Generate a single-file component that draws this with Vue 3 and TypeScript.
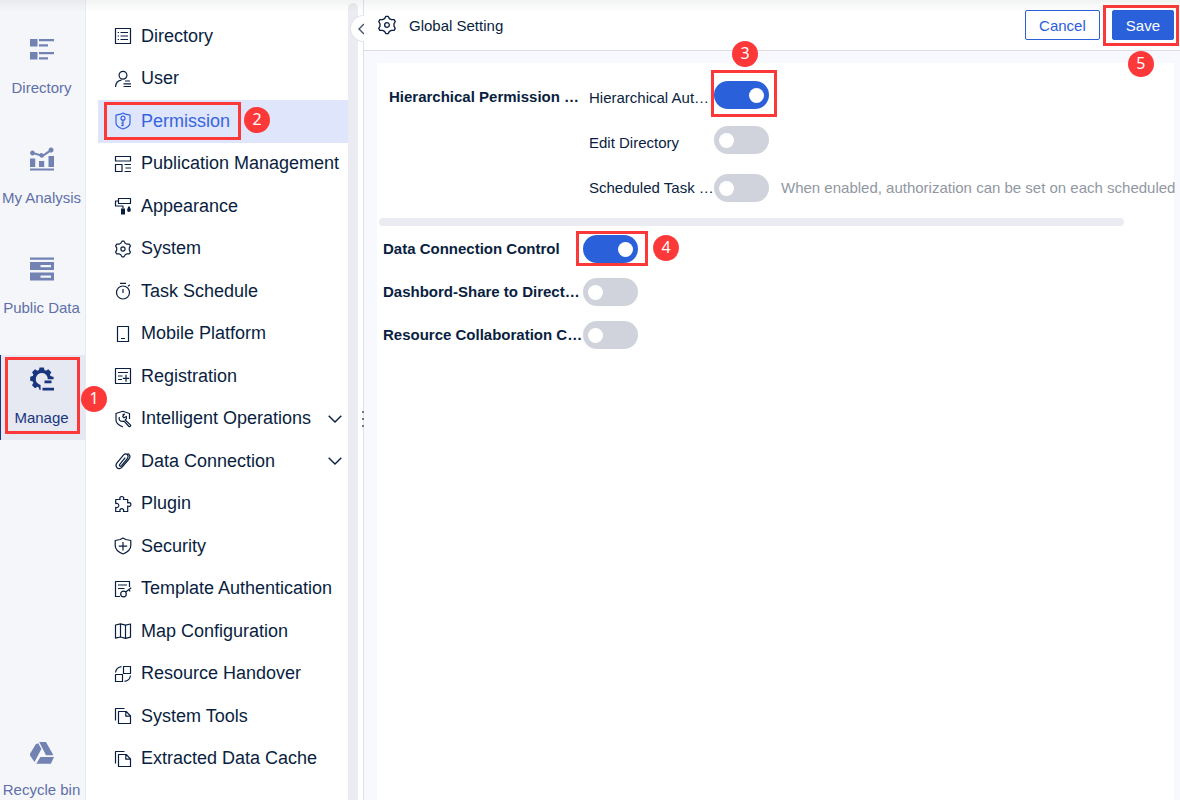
<script setup lang="ts">
import { ref } from 'vue'

interface RailItem {
  label: string
  fill: string
}

interface MenuItem {
  label: string
  line: string
  solid?: string
  expandable?: boolean
}

const gearLine =
  'M8 1.2H10L11.2 3.2 13 4.2H15.4L16.4 5.9 15.3 7.9V10.1L16.4 12.1 15.4 13.8H13L11.2 14.8 10 16.8H8L6.8 14.8 5 13.8H2.6L1.6 12.1 2.7 10.1V7.9L1.6 5.9 2.6 4.2H5L6.8 3.2ZM9 6.9a2.1 2.1 0 1 0 0 4.2a2.1 2.1 0 1 0 0-4.2Z'

const copyLine = 'M1.5 13.5V1.5H10.5M4.5 4.5H12.2L16.5 8.8V16.5H4.5ZM11.8 4.7V9.2H16.2'

const railItems: RailItem[] = [
  {
    label: 'Directory',
    fill: 'M0 2H7.5V9.5H0ZM9 2H24V4.3H9ZM9 7.2H18V9.5H9ZM0 15H7.5V22.5H0ZM9 15H24V17.3H9ZM9 20.2H18V22.5H9Z',
  },
  {
    label: 'My Analysis',
    fill: 'M0 11.5H5.2V20H0ZM9 14H14.2V20H9ZM18.5 9H24V20H18.5ZM0 21.5H24V23.6H0ZM2.5 3.6A2.4 2.4 0 0 1 4.8 5.4L9.6 7A2.5 2.5 0 0 1 13.3 7.2L18.6 3.6A2.5 2.5 0 1 1 19.8 5.2L14.2 9.1A2.5 2.5 0 0 1 9.4 9L4.4 7.5A2.4 2.4 0 1 1 2.5 3.6Z',
  },
  {
    label: 'Public Data',
    fill: 'M0 .5H24V2.8H0ZM0 5H24V13H0ZM10.5 8V10.3H21V8ZM0 15.5H24V23.6H0ZM10.5 18.5V20.8H21V18.5Z',
  },
  {
    label: 'Manage',
    fill: 'M9.6 .5H13.8L14.5 3.1 15.9 3.7 18.3 2.3 21.3 5.3 19.9 7.7 20.5 9.1 23.6 9.9V12.2H17.8A6 6 0 1 0 10.6 17.9V23H9.6L8.8 20.4 7.4 19.8 5 21.2 2 18.2 3.4 15.8 2.8 14.4 .2 13.7V9.7L2.8 9 3.4 7.6 2 5.2 5 2.3 7.4 3.7 8.9 3.1ZM14.5 13.5H21.5V16.2H14.5ZM12.5 20.8H24V23.5H12.5Z',
  },
]

const menuItems: MenuItem[] = [
  {
    label: 'Directory',
    line: 'M1.5 1.5H16.5V16.5H1.5ZM6.5 5.5H14M6.5 9H14M6.5 12.5H14',
    solid: 'M3.7 4.9H5V6.1H3.7ZM3.7 8.4H5V9.6H3.7ZM3.7 11.9H5V13.1H3.7Z',
  },
  {
    label: 'User',
    line: 'M9 1.3a3.9 3.9 0 1 0 0 7.8a3.9 3.9 0 1 0 0-7.8ZM1.5 17C1.8 12.9 4 10.5 7.5 10.2M11 11H16M9.5 13.8H17M9.5 16.5H17',
  },
  {
    label: 'Permission',
    line: 'M9 1 11.2 2.2 16 3.2V11C16 13.8 12.5 15.8 9 17 5.5 15.8 2 13.8 2 11V3.2L6.8 2.2ZM9 4.2a2 2 0 1 0 0 4a2 2 0 1 0 0-4ZM9 8.4V14.2M9 11H7.2M9 13.3H7.2',
  },
  {
    label: 'Publication Management',
    line: 'M1.5 1.5H16.5V6H1.5ZM1.5 9.5H8V16.5H1.5ZM10.5 9.5H17M11.5 13H17M10.5 16.5H17',
  },
  {
    label: 'Appearance',
    line: 'M4.5 1.5H16.5V6.5H4.5ZM4.5 4H1.5V9H9V11.5',
    solid: 'M7 11.5H11V17.5H7ZM15 9C17.6 12 17.2 15 15 15 12.8 15 12.4 12 15 9Z',
  },
  { label: 'System', line: gearLine },
  {
    label: 'Task Schedule',
    line: 'M9 4a6.5 6.5 0 1 0 0 13a6.5 6.5 0 1 0 0-13ZM6 1.3H12M9 7V11M14 4.4 15.8 2.8',
  },
  { label: 'Mobile Platform', line: 'M3.5 1.5H14.5V16.5H3.5ZM7 13.5H11' },
  {
    label: 'Registration',
    line: 'M1.5 1.5H16.5V16.5H1.5ZM4 5.5H14M4 9H8.5M4 12.5H8M12 7.8V14.8M8.8 11.3H15.2',
  },
  {
    label: 'Intelligent Operations',
    line: 'M15.5 9V3.5L8.8 1.3 2 3.5V10C2 13.5 5 15.5 9 17M8.6 4.6 10.4 4.1 8.7 6.4 10 7.8 12.4 6.5C12.9 8.4 12.2 9.4 11.2 10L16.6 15.1C17 16.1 16 17 15 16.5L10 11.1C6 12.1 4.2 9.3 5.4 7',
    expandable: true,
  },
  {
    label: 'Data Connection',
    line: 'M11.2 5.6 5.8 12.3C4.8 13.8 6.4 15.1 7.6 13.7L13.3 6.6C15.5 3.2 12.2.3 9.4 3.2L2.8 11.2C.4 14.9 4.9 18.8 8.1 15.2L15 7C17 4.4 15.4 2 13.6 1.5',
    expandable: true,
  },
  {
    label: 'Plugin',
    line: 'M1.7 4.5H6.2C5.2 2.6 6.4 1.5 7.8 1.5S10.4 2.6 9.4 4.5H13.7V8C15.7 7.1 16.9 8 16.9 9.5S15.7 12 13.7 11V16.5H9.4C10.2 14.6 9.1 13.7 7.8 13.7S5.4 14.6 6.2 16.5H1.7V12.4C3.8 12.9 4.8 11.8 4.8 10.5S3.8 8.1 1.7 8.6Z',
  },
  {
    label: 'Security',
    line: 'M9 1 11.8 2.5 16.8 3.5V8.5C16.8 12.5 13.5 15.2 9 17 4.5 15.2 1.2 12.5 1.2 8.5V3.5L6.2 2.5ZM9 5V13.4M4.8 9.2H13.2',
  },
  {
    label: 'Template Authentication',
    line: 'M15.5 7V1.5H1.5V16.5H6M4 5H13M4 8.5H10.5M9.5 11.2a2.8 2.8 0 1 0 0 5.6a2.8 2.8 0 1 0 0-5.6ZM11.4 12.2 17.2 7.7M14.8 9.7 16.2 11.4',
  },
  {
    label: 'Map Configuration',
    line: 'M1.5 3 6.5 1.8 11.5 3.2 16.5 2V15.2L11.5 16.4 6.5 15 1.5 16.2ZM6.5 1.8V15M11.5 3.2V16.4',
  },
  {
    label: 'Resource Handover',
    line: 'M9.5 1.5H16.5V8.5H9.5ZM1.5 9.5H8.5V16.5H1.5ZM1.5 7.5C2 4.3 4 2 7.5 1.6M16.5 10.5C16 13.7 14 16 10.5 16.4',
  },
  { label: 'System Tools', line: copyLine },
  { label: 'Extracted Data Cache', line: copyLine },
]

const activeRail = ref('Manage')
const activeMenu = ref('Permission')

const hierarchicalAuth = ref(true)
const editDirectory = ref(false)
const scheduledTask = ref(false)
const dataConnection = ref(true)
const dashboardShare = ref(false)
const collaboration = ref(false)
</script>

<template>
  <div class="app">
    <nav class="rail" aria-label="Modules">
      <button
        v-for="item in railItems"
        :key="item.label"
        type="button"
        class="rail-item"
        :class="{ active: item.label === activeRail }"
        @click="activeRail = item.label"
      >
        <svg viewBox="0 0 24 24" aria-hidden="true"><path :d="item.fill" fill-rule="evenodd" /></svg>
        <span>{{ item.label }}</span>
        <template v-if="item.label === 'Manage'">
          <i class="frame frame-manage"></i>
          <b class="step step-manage">1</b>
        </template>
      </button>
      <button type="button" class="rail-item bin">
        <svg viewBox="0 0 24 24" aria-hidden="true">
          <path d="M8.2 2.2 11.4 8 4.5 21 0 14.6V12.8L5.8 3.2ZM9.2 1H16L23.4 14.2H16ZM10.4 16H24L20.8 22.7H6.3Z" />
        </svg>
        <span>Recycle bin</span>
      </button>
    </nav>

    <aside class="side">
      <ul class="menu">
        <li v-for="item in menuItems" :key="item.label">
          <a
            href="#"
            class="menu-link"
            :class="{ active: item.label === activeMenu }"
            @click.prevent="activeMenu = item.label"
          >
            <svg class="menu-icon" viewBox="0 0 18 18" aria-hidden="true">
              <path class="line" :d="item.line" />
              <path v-if="item.solid" class="solid" :d="item.solid" />
            </svg>
            <span>{{ item.label }}</span>
            <svg v-if="item.expandable" class="chevron" viewBox="0 0 14 8" aria-hidden="true">
              <path d="M.7.7 7 7 13.3.7" />
            </svg>
            <template v-if="item.label === 'Permission'">
              <i class="frame frame-permission"></i>
              <b class="step step-permission">2</b>
            </template>
          </a>
        </li>
      </ul>
      <div class="track"></div>
      <button type="button" class="collapse" aria-label="Collapse menu">
        <svg viewBox="0 0 6 12" aria-hidden="true"><path d="M6 1 1 6 6 11" /></svg>
      </button>
      <div class="grip"><i></i><i></i><i></i></div>
    </aside>

    <main class="content">
      <header class="bar">
        <svg class="bar-icon" viewBox="0 0 18 18" aria-hidden="true"><path class="line" :d="gearLine" /></svg>
        <h1>Global Setting</h1>
        <button type="button" class="btn">Cancel</button>
        <button type="button" class="btn primary">
          Save
          <i class="frame frame-save"></i>
          <b class="step step-save">5</b>
        </button>
      </header>

      <section class="card">
        <div class="group">
          <h2 class="title">Hierarchical Permission …</h2>
          <div class="options">
            <div class="option">
              <label for="hierarchical-auth">Hierarchical Aut…</label>
              <span class="toggle">
                <input id="hierarchical-auth" v-model="hierarchicalAuth" type="checkbox" class="switch" />
                <i class="frame frame-auth"></i>
                <b class="step step-auth">3</b>
              </span>
            </div>
            <div class="option">
              <label for="edit-directory">Edit Directory</label>
              <span class="toggle">
                <input id="edit-directory" v-model="editDirectory" type="checkbox" class="switch" />
              </span>
            </div>
            <div class="option with-note">
              <label for="scheduled-task">Scheduled Task …</label>
              <span class="toggle">
                <input id="scheduled-task" v-model="scheduledTask" type="checkbox" class="switch" />
              </span>
              <p class="note">When enabled, authorization can be set on each scheduled</p>
            </div>
          </div>
        </div>
        <div class="scroll-thumb"></div>
        <div class="settings">
          <div class="setting">
            <label class="title" for="data-connection">Data Connection Control</label>
            <span class="toggle">
              <input id="data-connection" v-model="dataConnection" type="checkbox" class="switch" />
              <i class="frame frame-connection"></i>
              <b class="step step-connection">4</b>
            </span>
          </div>
          <div class="setting">
            <label class="title" for="dashboard-share">Dashbord-Share to Direct…</label>
            <span class="toggle">
              <input id="dashboard-share" v-model="dashboardShare" type="checkbox" class="switch" />
            </span>
          </div>
          <div class="setting">
            <label class="title" for="collaboration">Resource Collaboration C…</label>
            <span class="toggle">
              <input id="collaboration" v-model="collaboration" type="checkbox" class="switch" />
            </span>
          </div>
        </div>
      </section>
    </main>
  </div>
</template>

<style>
body {
  margin: 0;
}
</style>

<style scoped>
.app {
  display: flex;
  height: 100vh;
  overflow: hidden;
  position: relative;
  background: #fff;
  color: #091e40;
  font-family: 'Liberation Sans', Arial, sans-serif;
  font-size: 15px;
}

.app::before {
  content: '';
  position: absolute;
  inset: 0 0 auto;
  height: 12px;
  background: linear-gradient(rgba(60, 80, 80, 0.07), transparent);
  pointer-events: none;
  z-index: 2;
}

button {
  font: inherit;
  cursor: pointer;
}

/* Module rail */
.rail {
  display: flex;
  flex-direction: column;
  flex: none;
  gap: 25px;
  width: 85px;
  padding-top: 25px;
  background: #f5f6fa;
  border-right: 1px solid #e8eaf1;
  position: relative;
  z-index: 1;
}

.rail-item {
  display: flex;
  flex-direction: column;
  align-items: center;
  flex: none;
  gap: 18px;
  height: 85px;
  padding: 12px 2px 0 0;
  border: 0;
  background: none;
  color: #5f70a8;
  line-height: 18px;
  white-space: nowrap;
  position: relative;
}

.rail-item svg {
  width: 24px;
  height: 24px;
  fill: #7182b3;
}

.rail-item.active {
  background: #e6e9f2;
  color: #1a3580;
  box-shadow: inset 1px 0 #1a3580;
}

.rail-item.active svg {
  fill: #1a3580;
}

.rail-item.bin {
  height: 71px;
  gap: 16px;
  margin-top: auto;
}

/* Menu */
.side {
  display: flex;
  flex: none;
  width: 277px;
  border-right: 1px solid #dfe1ea;
  position: relative;
}

.menu {
  display: flex;
  flex-direction: column;
  flex: 1;
  margin: 0;
  padding: 15px 0 20px 12px;
  list-style: none;
}

.menu li {
  display: flex;
  flex: 1;
}

.menu-link {
  display: flex;
  align-items: center;
  flex: 1;
  padding: 0 6px 0 16px;
  color: #091e40;
  font-size: 18px;
  text-decoration: none;
  white-space: nowrap;
  position: relative;
}

.menu-link.active {
  background: #dfe5fa;
  color: #3664e0;
}

.menu-icon {
  width: 18px;
  height: 18px;
  margin-right: 9px;
}

.line {
  fill: none;
  stroke: currentColor;
  stroke-width: 1.2;
  stroke-linejoin: round;
}

.solid {
  fill: currentColor;
}

.chevron {
  width: 14px;
  height: 8px;
  margin-left: auto;
  fill: none;
  stroke: #091e40;
  stroke-width: 1.4;
}

.track {
  width: 10px;
  margin: 3px 5px 0 0;
  border-radius: 5px 5px 0 0;
  background: #ebecf2;
}

.collapse {
  display: flex;
  align-items: center;
  justify-content: flex-end;
  width: 14px;
  height: 27px;
  padding: 0;
  border: 1px solid #e2e4ec;
  border-right: 0;
  border-radius: 14px 0 0 14px;
  background: #fff;
  position: absolute;
  top: 15px;
  right: -1px;
}

.collapse svg {
  width: 6px;
  height: 12px;
  fill: none;
  stroke: #45536e;
  stroke-width: 1.4;
}

.grip {
  display: flex;
  flex-direction: column;
  gap: 5px;
  position: absolute;
  top: 411px;
  right: -1px;
}

.grip i {
  width: 2px;
  height: 2px;
  background: #6f7a90;
}

/* Content */
.content {
  display: flex;
  flex-direction: column;
  flex: 1;
  min-width: 0;
  background: #f8f9fe;
}

.bar {
  display: flex;
  align-items: center;
  flex: none;
  gap: 12px;
  height: 50px;
  padding: 0 6px 0 13px;
  border-bottom: 1px solid #dadce6;
  background: #fff;
}

.bar-icon {
  width: 20px;
  height: 20px;
}

h1 {
  flex: 1;
  margin: 0;
  font-size: 15px;
  font-weight: 400;
}

.btn {
  height: 30px;
  padding: 0 13px;
  border: 1px solid #2b60db;
  border-radius: 2px;
  background: #fff;
  color: #2b60db;
  font-size: 15px;
  position: relative;
}

.btn.primary {
  background: #2b60db;
  color: #fff;
}

.card {
  flex: 1;
  margin: 12px 6px 0 13px;
  background: #fff;
}

.group {
  display: flex;
  padding: 18px 0 0 12px;
}

.title {
  flex: none;
  width: 200px;
  margin: 0;
  font-size: 15px;
  font-weight: 700;
  line-height: 31px;
  white-space: nowrap;
}

.options {
  display: flex;
  flex-direction: column;
  flex: 1;
  gap: 14px;
  min-width: 0;
}

.option {
  display: flex;
  height: 31px;
  line-height: 33px;
}

.option label {
  flex: none;
  width: 125px;
  white-space: nowrap;
}

.with-note .toggle {
  align-self: flex-end;
}

.toggle {
  display: flex;
  flex: none;
  height: 28px;
  position: relative;
}

.switch {
  appearance: none;
  width: 55px;
  height: 28px;
  margin: 0;
  padding: 7px 5px 6px;
  box-sizing: border-box;
  display: flex;
  border-radius: 14px;
  background: #d0d3db;
  cursor: pointer;
}

.switch::before {
  content: '';
  width: 15px;
  height: 15px;
  border-radius: 50%;
  background: #fff;
}

.switch:checked {
  justify-content: flex-end;
  background: #2b60db;
}

.note {
  flex: 1;
  min-width: 0;
  margin: 0 0 0 12px;
  color: #9097a3;
  white-space: nowrap;
}

.scroll-thumb {
  height: 8px;
  margin: 16px 50px 9px 2px;
  border-radius: 4px;
  background: #ebecf2;
}

.settings {
  display: flex;
  flex-direction: column;
  gap: 15px;
  padding-left: 6px;
}

.setting {
  display: flex;
  height: 28px;
}

.setting .title {
  line-height: 27px;
}

/* Walkthrough markers */
.frame {
  box-sizing: border-box;
  border: 3px solid #fd3838;
  pointer-events: none;
  position: absolute;
}

.step {
  width: 26px;
  height: 26px;
  border-radius: 50%;
  background: #fd3838;
  color: #fff;
  font: 400 16px/24px 'Noto Sans', sans-serif;
  text-align: center;
  pointer-events: none;
  position: absolute;
  z-index: 3;
}

.frame-manage {
  inset: 2px 5px 6px;
}

.step-manage {
  top: 31px;
  left: 81px;
}

.frame-permission {
  top: 2px;
  bottom: 3px;
  left: 6px;
  width: 137px;
}

.step-permission {
  top: 7px;
  left: 146px;
}

.frame-auth {
  inset: -11px -8px -8px -3px;
}

.step-auth {
  top: -40px;
  left: 18px;
}

.frame-connection {
  inset: -4px -10px -3px -7px;
}

.step-connection {
  top: 0;
  left: 70px;
}

.frame-save {
  inset: -6px -6px -7px -10px;
}

.step-save {
  top: 40px;
  left: 15px;
}
</style>
